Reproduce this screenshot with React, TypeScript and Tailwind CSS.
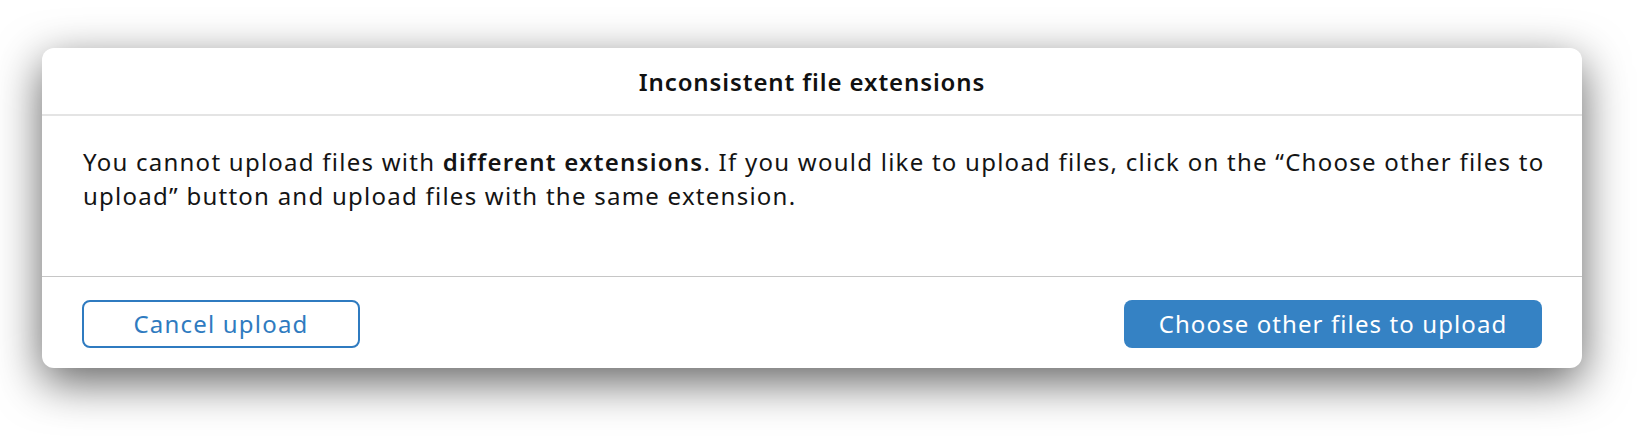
import React from "react";

export default function App() {
  return (
    <div
      className="w-[1640px] h-[436px] bg-white pt-[48px] pl-[42px]"
      style={{ fontFamily: '"Noto Sans", "Open Sans", sans-serif' }}
    >
      <div className="w-[1540px] h-[320px] bg-white rounded-[12px] shadow-[0_14px_46px_rgba(0,0,0,0.62)] flex flex-col overflow-hidden">
        <div className="h-[68px] flex items-center justify-center border-b-2 border-[#e4e4e4]">
          <h1 className="text-[24px] font-semibold text-[#111] tracking-[0.9px] pt-[2px]">
            Inconsistent file extensions
          </h1>
        </div>
        <div className="flex-1 pl-[41px] pr-[10px] pt-[29px] border-b border-[#c6c6c6]">
          <p className="text-[24px] leading-[34px] text-[#141414] tracking-[1.25px] whitespace-nowrap">
            You cannot upload files with <strong className="font-semibold">different extensions</strong>. If you would like to upload files, click on the “Choose other files to
            <br />
            upload” button and upload files with the same extension.
          </p>
        </div>
        <div className="flex items-center justify-between px-[40px] pt-[23px] pb-[20px]">
          <button className="w-[278px] h-[48px] rounded-[8px] border-2 border-[#2f7bc0] text-[#2f7bc0] text-[24px] tracking-[1.2px] bg-white">
            Cancel upload
          </button>
          <button className="w-[418px] h-[48px] rounded-[8px] bg-[#3582c4] text-white text-[24px] tracking-[1.1px]">
            Choose other files to upload
          </button>
        </div>
      </div>
    </div>
  );
}
